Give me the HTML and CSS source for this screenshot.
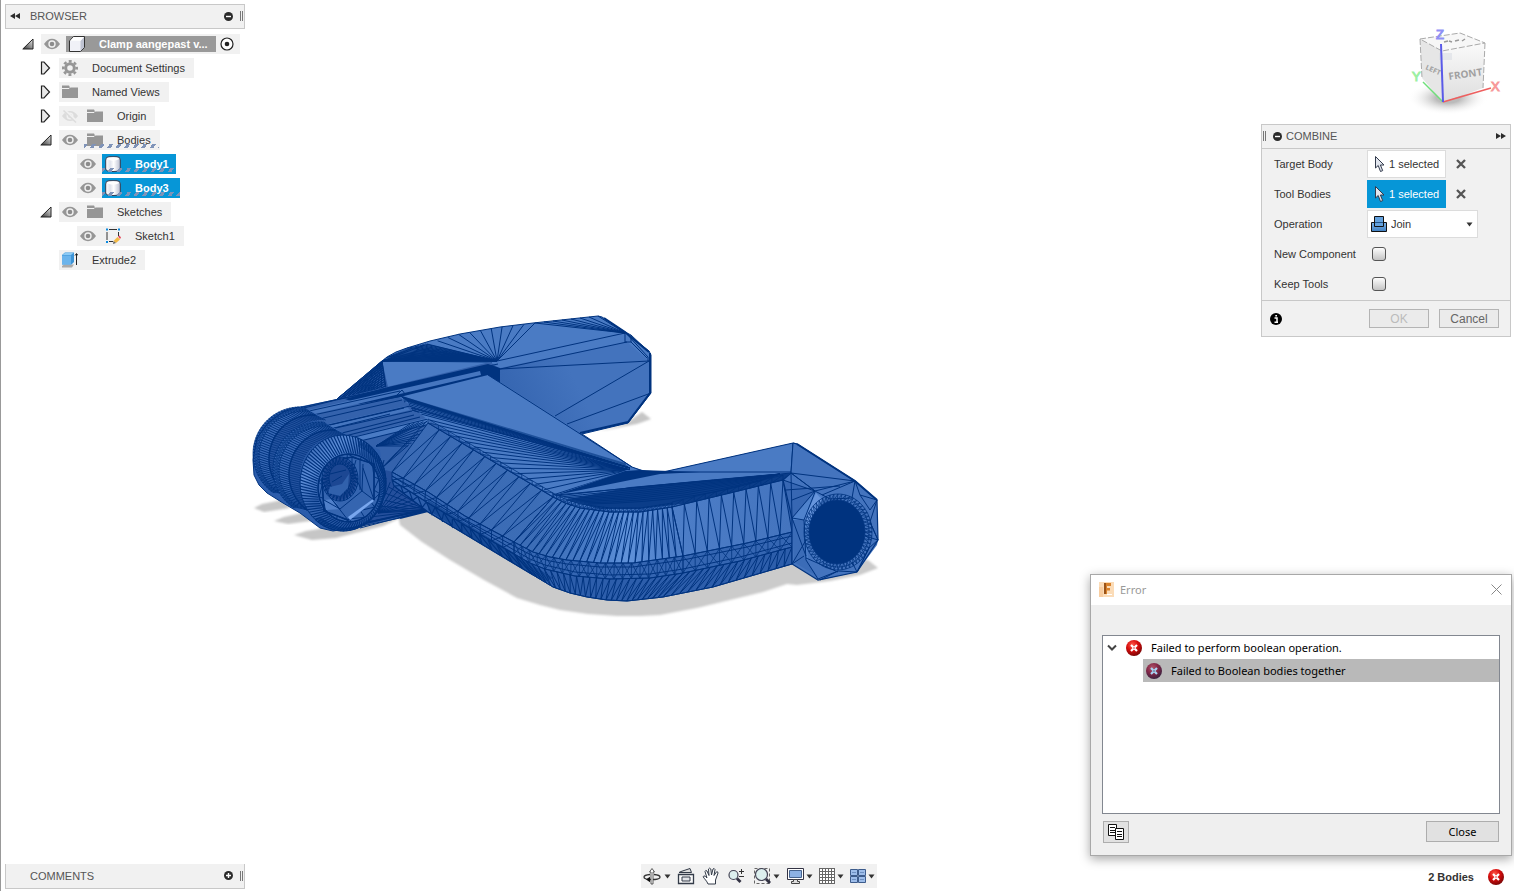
FILE: index.html
```html
<!DOCTYPE html>
<html lang="en">
<head>
<meta charset="utf-8">
<title>Combine</title>
<link rel="stylesheet" href="styles.css">
</head>
<body>
<svg class="defs" aria-hidden="true">
  <defs>
    <linearGradient id="tri" x1="0" y1="1" x2="1" y2="0"><stop offset="0" stop-color="#333"/><stop offset="1" stop-color="#eee"/></linearGradient>
    <radialGradient id="red" cx=".4" cy=".3" r=".7"><stop offset="0" stop-color="#ff5a4a"/><stop offset=".5" stop-color="#d80d0d"/><stop offset="1" stop-color="#7c0505"/></radialGradient>
    <radialGradient id="plum" cx=".4" cy=".3" r=".7"><stop offset="0" stop-color="#b0546a"/><stop offset=".5" stop-color="#842747"/><stop offset="1" stop-color="#3c2240"/></radialGradient>
    <linearGradient id="cyl" x1="0" x2="1"><stop offset="0" stop-color="#fff"/><stop offset=".3" stop-color="#dfe2ec"/><stop offset=".55" stop-color="#fff"/><stop offset="1" stop-color="#b8bdd0"/></linearGradient>
    <linearGradient id="join" x1="0" y1="0" x2="0" y2="1"><stop offset="0" stop-color="#7db4ea"/><stop offset="1" stop-color="#3f7fc0"/></linearGradient>
    <symbol id="i-open" viewBox="0 0 12 12"><path d="M11 1V11H.8Z" fill="url(#tri)" stroke="#222"/></symbol>
    <symbol id="i-shut" viewBox="0 0 12 14"><path d="M1.500 1H4L9.500 7 4 13H1.500Z" fill="#e8e8e8" stroke="#222" stroke-width="1.200"/></symbol>
    <symbol id="i-eye" viewBox="0 0 16 16"><path d="M0 8Q3.500 2.800 8 2.800T16 8Q12.500 13.200 8 13.200T0 8Z" fill="#969696"/><circle cx="8" cy="8" r="3.700" fill="#f1f1f1"/><circle cx="8" cy="8" r="2.300" fill="#8c8c8c"/></symbol>
    <symbol id="i-noeye" viewBox="0 0 16 16"><path d="M0 8Q3.500 3 8 3T16 8Q12.500 13 8 13T0 8Z" fill="#dcdcdc"/><circle cx="8" cy="8" r="3.500" fill="#f1f1f1"/><circle cx="8" cy="8" r="2" fill="#dcdcdc"/><path d="M1.500 1.500L15 14" stroke="#f1f1f1" stroke-width="3"/><path d="M1.500 2.500L14 14.500" stroke="#dcdcdc" stroke-width="1.500"/></symbol>
    <symbol id="i-folder" viewBox="0 0 16 16"><path d="M0 1.500H7L8 3.500H16V14H0Z" fill="#969696"/><path d="M0 4.500H7L8 3.500" stroke="#f1f1f1" fill="none"/></symbol>
    <symbol id="i-gear" viewBox="0 0 16 16"><circle cx="8" cy="8" r="4.300" fill="none" stroke="#969696" stroke-width="3"/><circle cx="8" cy="8" r="6.700" fill="none" stroke="#969696" stroke-width="2.600" stroke-dasharray="2.900 2.362" stroke-dashoffset="1.450"/></symbol>
    <symbol id="i-cube" viewBox="0 0 16 16"><path d="M.5 5L4.500 .5H15.500V11.500L11.500 15.500H.5Z" fill="#f0f1f7" stroke="#333"/><path d="M11.500 5L15 1V11.300L11.500 15Z" fill="#bfc3d2"/><path d="M1.200 4.800L4.800 1H14.800L11.500 4.800Z" fill="#fff"/></symbol>
    <symbol id="i-body" viewBox="0 0 16 16"><path d="M.7 4Q.7 .7 4 .7H12Q15.300 .7 15.300 4V13Q15.300 15.500 8 15.500T.7 13Z" fill="url(#cyl)" stroke="#333c52"/><path d="M1.500 3Q8 6.500 14.500 3Q13 1.200 8 1.200T1.500 3Z" fill="#fff"/></symbol>
    <symbol id="i-sketch" viewBox="0 0 16 16"><path d="M2 4V12M4 1.500H12M13.500 4V8M4 13.500H8" stroke="#333" fill="none"/><path d="M1 .5h2v2h-2zM13 .5h2v2h-2zM1 13h2v2h-2z" fill="#0a8ae0"/><path d="M8.500 13L12.500 9 15 11.500 11 15Z" fill="#f4b942"/><path d="M13 8.500L14.500 7.500 16 9.500 15 11Z" fill="#e4485a"/><path d="M8 16L8.500 13 11 15Z" fill="#666"/></symbol>
    <symbol id="i-extrude" viewBox="0 0 16 16"><path d="M0 14L2 12.500H12L10 15.500H0Z" fill="#aaa"/><path d="M0 3L3 .5H12V10L9.500 12.500H0Z" fill="#3d94d6"/><path d="M0 3.500H9V12.500H0Z" fill="#6bb4ec"/><path d="M.5 3L3 .7H11.500L9 3Z" fill="#8ccaf5"/><path d="M14.500 2V13M13 3.500L14.500 1.500 16 3.500" stroke="#222" fill="none"/></symbol>
    <symbol id="i-x" viewBox="0 0 10 10"><path d="M1 1L9 9M9 1L1 9" stroke="#555" stroke-width="2.300"/></symbol>
    <symbol id="i-err" viewBox="0 0 16 16"><circle cx="8" cy="8" r="8" fill="url(#red)"/><path d="M5 5L11 11M11 5L5 11" stroke="#fff" stroke-width="2.200"/><circle cx="8" cy="8" r=".7" fill="#b00"/></symbol>
    <symbol id="i-err2" viewBox="0 0 16 16"><circle cx="8" cy="8" r="8" fill="url(#plum)"/><path d="M5 5L11 11M11 5L5 11" stroke="#a9d4f4" stroke-width="2.200"/><circle cx="8" cy="8" r=".7" fill="#345"/></symbol>
    <symbol id="i-arrow" viewBox="0 0 12 18"><path d="M1.500 1.500V13L4.200 10.500 6.500 16.500 8.700 15.600 6.400 10H10Z" fill="#e2e6ee" stroke="#333b4d"/></symbol>
    <symbol id="i-caret" viewBox="0 0 7 5"><path d="M.5 .5H6.500L3.500 4.500Z" fill="#333"/></symbol>
    <symbol id="i-minus" viewBox="0 0 9 9"><circle cx="4.500" cy="4.500" r="4.500" fill="#2b2b2b"/><path d="M2 4.500H7" stroke="#fff" stroke-width="1.400"/></symbol>
    <symbol id="i-plus" viewBox="0 0 9 9"><circle cx="4.500" cy="4.500" r="4.500" fill="#2b2b2b"/><path d="M2 4.500H7M4.500 2V7" stroke="#fff" stroke-width="1.400"/></symbol>
    <symbol id="i-dbl" viewBox="0 0 10 6"><path d="M0 0L5 3V0L10 3 5 6V3L0 6Z" fill="#2b2b2b"/></symbol>
  </defs>
</svg>

<main class="app">
  <svg class="model" viewBox="0 0 1514 891" preserveAspectRatio="xMinYMin meet" role="img" aria-label="Clamp model"></svg>

  <section class="browser">
    <header class="bar">
      <button class="plain" aria-label="Collapse browser"><svg class="dbl flip"><use href="#i-dbl"/></svg></button>
      <h2 class="bar-title">BROWSER</h2>
      <button class="plain" aria-label="Hide browser"><svg class="round"><use href="#i-minus"/></svg></button>
      <span class="grip"></span>
    </header>
    <ul class="tree">
      <li>
        <div class="row">
          <button class="toggle" aria-label="Collapse"><svg class="tri-open"><use href="#i-open"/></svg></button>
          <div class="chip chip-root"><svg class="ico"><use href="#i-eye"/></svg>
            <span class="label root"><svg class="ico"><use href="#i-cube"/></svg>Clamp aangepast v...</span>
            <svg class="radio" viewBox="0 0 14 14"><circle cx="7" cy="7" r="6" fill="#fff" stroke="#222" stroke-width="1.200"/><circle cx="7" cy="7" r="2.300" fill="#222"/></svg>
          </div>
        </div>
        <ul>
          <li><div class="row"><button class="toggle" aria-label="Expand"><svg class="tri-shut"><use href="#i-shut"/></svg></button><div class="chip"><span class="label"><svg class="ico"><use href="#i-gear"/></svg>Document Settings</span></div></div></li>
          <li><div class="row"><button class="toggle" aria-label="Expand"><svg class="tri-shut"><use href="#i-shut"/></svg></button><div class="chip"><span class="label"><svg class="ico"><use href="#i-folder"/></svg>Named Views</span></div></div></li>
          <li><div class="row"><button class="toggle" aria-label="Expand"><svg class="tri-shut"><use href="#i-shut"/></svg></button><div class="chip"><svg class="ico"><use href="#i-noeye"/></svg><span class="label"><svg class="ico"><use href="#i-folder"/></svg>Origin</span></div></div></li>
          <li>
            <div class="row"><button class="toggle" aria-label="Collapse"><svg class="tri-open"><use href="#i-open"/></svg></button><div class="chip"><svg class="ico"><use href="#i-eye"/></svg><span class="label hatched hatched-wide"><svg class="ico"><use href="#i-folder"/></svg>Bodies</span></div></div>
            <ul>
              <li><div class="row leaf"><div class="chip flush"><svg class="ico"><use href="#i-eye"/></svg><span class="label picked hatched"><svg class="ico"><use href="#i-body"/></svg>Body1</span></div></div></li>
              <li><div class="row leaf"><div class="chip flush"><svg class="ico"><use href="#i-eye"/></svg><span class="label picked picked-wide hatched"><svg class="ico"><use href="#i-body"/></svg>Body3</span></div></div></li>
            </ul>
          </li>
          <li>
            <div class="row"><button class="toggle" aria-label="Collapse"><svg class="tri-open"><use href="#i-open"/></svg></button><div class="chip"><svg class="ico"><use href="#i-eye"/></svg><span class="label"><svg class="ico"><use href="#i-folder"/></svg>Sketches</span></div></div>
            <ul>
              <li><div class="row leaf"><div class="chip"><svg class="ico"><use href="#i-eye"/></svg><span class="label"><svg class="ico"><use href="#i-sketch"/></svg>Sketch1</span></div></div></li>
            </ul>
          </li>
          <li><div class="row leaf"><div class="chip"><span class="label"><svg class="ico"><use href="#i-extrude"/></svg>Extrude2</span></div></div></li>
        </ul>
      </li>
    </ul>
  </section>

  <div class="side">
    <svg class="viewcube" viewBox="0 0 100 96" role="img" aria-label="View cube">
      <defs>
        <radialGradient id="cshadow"><stop offset=".3" stop-color="#bbb"/><stop offset="1" stop-color="#fff" stop-opacity="0"/></radialGradient>
        <linearGradient id="cfront" x1="0" y1="0" x2="0" y2="1"><stop offset="0" stop-color="#fafafa"/><stop offset="1" stop-color="#dedede"/></linearGradient>
      </defs>
      <ellipse cx="42" cy="74" rx="40" ry="17" fill="url(#cshadow)"/>
      <path d="M14 15L54 9 79 19 36 27Z" fill="#f7f7f7"/>
      <path d="M14 15L36 27 37 78 16 54Z" fill="#e6e6e6"/>
      <path d="M36 27L79 19 77 64 37 78Z" fill="url(#cfront)"/>
      <path d="M33 29H46V36H33Z" fill="#d5d9e2" opacity=".5"/>
      <path d="M14 15L54 9 79 19 36 27ZM14 15L16 54M79 19L77 64" fill="none" stroke="#aaa" stroke-dasharray="6 2"/>
      <path d="M38 18l4-1M43 17l3 1M49 17l4-1M56 17l3-2" stroke="#999" stroke-width="1.500"/>
      <text class="face" x="43" y="56" transform="rotate(-8 43 56)">FRONT</text>
      <text class="face face-left" x="19" y="45" transform="rotate(24 19 45)">LEFT</text>
      <path d="M37 78L17 58" stroke="#6fe07a" stroke-width="1.500"/>
      <path d="M37 78L85 64" stroke="#ee5f5f" stroke-width="1.500"/>
      <path d="M37 78L35 20" stroke="#5a5ae8" stroke-width="2"/>
      <text class="axis axis-z" x="30" y="15">Z</text>
      <text class="axis axis-y" x="6" y="57">Y</text>
      <text class="axis axis-x" x="85" y="67">X</text>
    </svg>

    <form class="combine">
      <header class="combine-head">
        <span class="grip"></span>
        <svg class="round"><use href="#i-minus"/></svg>
        <h2 class="bar-title">COMBINE</h2>
        <button type="button" class="plain" aria-label="Expand panel"><svg class="dbl"><use href="#i-dbl"/></svg></button>
      </header>
      <div class="fields">
        <label for="target">Target Body</label>
        <div class="field"><button type="button" id="target" class="pick"><svg class="cursor"><use href="#i-arrow"/></svg>1 selected</button><button type="button" class="plain" aria-label="Clear target"><svg class="clear"><use href="#i-x"/></svg></button></div>
        <label for="tools">Tool Bodies</label>
        <div class="field"><button type="button" id="tools" class="pick active"><svg class="cursor"><use href="#i-arrow"/></svg>1 selected</button><button type="button" class="plain" aria-label="Clear tools"><svg class="clear"><use href="#i-x"/></svg></button></div>
        <label for="op">Operation</label>
        <div class="field select">
          <select id="op"><option>Join</option><option>Cut</option><option>Intersect</option></select>
          <svg class="join" viewBox="0 0 16 16"><path d="M.5 6.500H15.500V15.500H.5Z" fill="url(#join)" stroke="#111"/><path d="M3.500 .5H12.500V10.500H3.500Z" fill="#64a2de" stroke="#111"/><path d="M4 6.500H12" stroke="#25568a"/></svg>
          <svg class="select-caret"><use href="#i-caret"/></svg>
        </div>
        <label for="newc">New Component</label>
        <div class="field"><input type="checkbox" id="newc"></div>
        <label for="keep">Keep Tools</label>
        <div class="field"><input type="checkbox" id="keep"></div>
      </div>
      <footer class="combine-foot">
        <svg class="info" viewBox="0 0 12 12"><circle cx="6" cy="6" r="6" fill="#000"/><path d="M4.500 5H7V9M4.500 9.200H8M5.300 2.800H7" stroke="#fff" stroke-width="1.500" fill="none"/></svg>
        <button type="button" class="btn" disabled>OK</button>
        <button type="button" class="btn">Cancel</button>
      </footer>
    </form>

    <section class="dialog" role="dialog" aria-labelledby="err-title">
      <header class="dialog-head">
        <svg class="logo" viewBox="0 0 15 15"><path d="M0 0H15V15H0Z" fill="#fbdcb8"/><path d="M0 5H4V15H0Z" fill="#f8cda0"/><path d="M5 1H12V4H8V6H11V8.500H8V12H5Z" fill="#d9822b"/><path d="M5 1H7V12H5Z" fill="#9b5316"/><path d="M8 12H13V13H8Z" fill="#fff"/></svg>
        <h2 id="err-title">Error</h2>
        <button class="plain" aria-label="Dismiss"><svg class="close" viewBox="0 0 11 11"><path d="M.5 .5L10.500 10.500M10.500 .5L.5 10.500" stroke="#888" fill="none"/></svg></button>
      </header>
      <div class="dialog-body">
        <ul class="errors">
          <li class="error"><svg class="chev" viewBox="0 0 10 8"><path d="M1 1.500L5 5.500 9 1.500" stroke="#444" stroke-width="2" fill="none"/></svg><svg class="ico"><use href="#i-err"/></svg>Failed to perform boolean operation.</li>
          <li class="error error-sub"><svg class="ico"><use href="#i-err2"/></svg>Failed to Boolean bodies together</li>
        </ul>
        <div class="dialog-foot">
          <button class="copy" aria-label="Copy"><svg viewBox="0 0 17 17"><path d="M.5 .5H8.500V11.500H.5Z" fill="#fff" stroke="#111"/><path d="M2 3.500H7M2 6.500H7M2 8.500H7" stroke="#111"/><path d="M7.500 4.500H15.500V15.500H7.500Z" fill="#fff" stroke="#111"/><path d="M9 7.500H14M9 10.500H14M9 12.500H14" stroke="#111"/></svg></button>
          <button class="btn-close">Close</button>
        </div>
      </div>
    </section>
  </div>

  <section class="bar comments">
    <h2 class="bar-title">COMMENTS</h2>
    <button class="plain" aria-label="Add comment"><svg class="round"><use href="#i-plus"/></svg></button>
    <span class="grip"></span>
  </section>

  <nav class="tools">
    <button class="tool tool-spaced" aria-label="Orbit"><svg class="t18" viewBox="0 0 18 18"><path d="M7 7.500C3 7.800 1 8.800 1 10S3.500 12.500 8 12.500H12C15 12.200 17 11.200 17 10S15 7.800 11 7.500" fill="none" stroke="#333" stroke-width="1.300"/><path d="M8 17V5H6.500L9 1.500 11.500 5H10V17Z" fill="#fff" stroke="#333" stroke-width=".8"/><path d="M3 12.500L7 9.800V15.200Z" fill="#111"/></svg><svg class="caret"><use href="#i-caret"/></svg></button>
    <button class="tool" aria-label="Look at"><svg class="t18" viewBox="1 1 18 18"><path d="M2.500 8.500H17.500V17.500H2.500Z" fill="#fafafa" stroke="#333b48" stroke-width="1.300"/><path d="M6 11H14V15H6Z" fill="#e4e6ea" stroke="#333b48"/><path d="M3 6.500L5 5.500 14 2.500 15.500 6.500Z" fill="#ddd" stroke="#333b48"/></svg></button>
    <button class="tool" aria-label="Pan"><svg class="t20" viewBox="0 0 20 20"><path d="M7 18C6 15 3 12.500 2.200 10.800Q2.500 9 4.500 10.500L6 12 4 5.500Q4.500 3.700 6 5L8 9.500 7.500 3Q8.500 1.300 9.800 3L10.500 9 12 3Q13.300 1.800 14 3.500L13 9.500 15.500 5.800Q17 5.300 17 7L14.500 14V18Z" fill="#fff" stroke="#333b48"/></svg></button>
    <button class="tool" aria-label="Zoom"><svg class="t20" viewBox="0 0 20 20"><circle cx="6.500" cy="9" r="4.500" fill="#dcefee" stroke="#445" stroke-width="1.200"/><path d="M10 12.500L13.500 16" stroke="#334" stroke-width="2.800"/><path d="M12 5.500H17M14.500 3V8M12 10.500H17" stroke="#333"/></svg></button>
    <button class="tool" aria-label="Fit"><svg class="t20" viewBox="0 0 20 20"><path d="M1.500 2.500H16.500V17.500H1.500Z" fill="none" stroke="#666" stroke-dasharray="3 2"/><circle cx="8.500" cy="8.500" r="6" fill="#dcefee" stroke="#445" stroke-width="1.200"/><path d="M13 13L17 17" stroke="#334" stroke-width="2.800"/></svg><svg class="caret"><use href="#i-caret"/></svg></button>
    <button class="tool" aria-label="Display settings"><svg class="t20" viewBox="0 0 20 20"><path d="M1.500 2.500H17.500V13.500H1.500Z" fill="#fff" stroke="#334"/><path d="M3.500 4.500H15.500V11.500H3.500Z" fill="#8db2e4" stroke="#46648f"/><path d="M7.500 13.500H11.500V15.500H13.500V17.500H5.500V15.500H7.500Z" fill="#ddd" stroke="#444"/></svg><svg class="caret"><use href="#i-caret"/></svg></button>
    <button class="tool" aria-label="Grid"><svg class="t18" viewBox="0 0 18 18"><path d="M.5 1.500H15.500V16.500H.5Z" fill="#fff"/><path d="M.5 1V17M3.500 1V17M6.500 1V17M9.500 1V17M12.500 1V17M15.500 1V17M0 1.500H16M0 4.500H16M0 7.500H16M0 10.500H16M0 13.500H16M0 16.500H16" stroke="#666"/></svg><svg class="caret"><use href="#i-caret"/></svg></button>
    <button class="tool" aria-label="Viewports"><svg class="t18" viewBox="0 0 18 18"><path d="M.5 2.500H7.500V8.500H.5ZM8.500 2.500H15.500V8.500H8.500ZM.5 9.500H7.500V15.500H.5ZM8.500 9.500H15.500V15.500H8.500Z" fill="#9dbdea" stroke="#3d5c8c"/><path d="M2 5.500H6M10 5.500H14M2 12.500H6M10 12.500H14" stroke="#6e90c2"/></svg><svg class="caret"><use href="#i-caret"/></svg></button>
  </nav>

  <div class="status"><span>2 Bodies</span><svg class="ico"><use href="#i-err"/></svg></div>
</main>
<script src="model.js"></script>
</body>
</html>
```
FILE: styles.css
```css
* { box-sizing: border-box; }
body {
  margin: 0;
  background: #fff;
  color: #333;
  font-family: "Liberation Sans", Arial, sans-serif;
  font-size: 11px;
  line-height: 16px;
}
h2 { margin: 0; font-size: 11px; font-weight: 400; }
ul { margin: 0; padding: 0; list-style: none; }
svg { display: block; flex: none; }
button, select { font: inherit; color: inherit; }
.defs { position: absolute; width: 0; height: 0; }

.app {
  position: relative;
  min-height: 100vh;
  display: grid;
  grid-template-columns: 1fr auto 1fr;
  grid-template-rows: 1fr auto;
  row-gap: 8px;
  padding: 4px 2px 2px 4px;
  border-left: 1px solid #999;
}
.model { position: absolute; top: 0; left: -1px; width: 1514px; height: 891px; }
.browser, .side, .comments, .tools, .status { position: relative; }

.plain { padding: 0; border: 0; background: none; }
.round { width: 9px; height: 9px; }
.dbl { width: 10px; height: 6px; }
.flip { rotate: 180deg; }
.grip { width: 3px; height: 10px; border: solid #777; border-width: 0 1px; }

.bar {
  display: flex;
  align-items: center;
  width: 240px;
  height: 25px;
  padding: 0 0 1px 4px;
  background: #f1f1f1;
  border: 1px solid #c8c8c8;
}
.bar-title { flex: 1; color: #555; }
.bar .bar-title { padding-left: 10px; }
.bar .grip { margin: 0 1px 0 7px; }
.comments { align-self: end; border-top: 0; padding-left: 14px; }

.browser { grid-column: 1; }
.tree { padding: 5px 0 0 18px; }
.tree ul { padding-left: 18px; }
.row { display: flex; align-items: center; height: 20px; margin-bottom: 4px; }
.leaf { padding-left: 18px; }
.toggle { width: 18px; height: 20px; padding: 0; border: 0; background: none; }
.tri-open { width: 12px; height: 12px; margin-left: -1px; }
.tri-shut { width: 12px; height: 14px; margin-left: -1px; }
.chip { display: flex; align-items: center; gap: 6px; height: 20px; padding: 0 9px 0 3px; background: #f1f1f1; }
.chip > .label:first-child { padding-left: 0; }
.chip.flush { padding-right: 0; }
.chip-root { width: 199px; padding-right: 0; }
.label { position: relative; display: flex; align-items: center; gap: 14px; height: 20px; padding-left: 3px; white-space: nowrap; }
.ico { width: 16px; height: 16px; }
.root { width: 150px; height: 16px; background: #999; color: #fff; font-weight: 700; }
.radio { width: 14px; height: 14px; margin-left: -2px; }
.picked { padding-right: 7px; background: #0696d7; color: #fff; font-weight: 700; }
.picked-wide { padding-right: 11px; }
.hatched::after {
  content: "";
  position: absolute;
  inset: auto 0 2px 0;
  height: 4px;
  background: repeating-linear-gradient(125deg, #7f93b8 0 3px, transparent 3px 7px);
}
.hatched-wide::after { right: -8px; }

.side { grid-column: 2 / 4; display: flex; flex-direction: column; align-items: flex-end; padding-top: 20px; }
.viewcube { width: 100px; height: 96px; margin-right: 6px; }
.face { font: 700 10px "Open Sans", sans-serif; fill: #a0a0a0; }
.face-left { font-size: 7px; }
.axis { font: 13px "Liberation Sans", sans-serif; stroke: currentColor; fill: currentColor; }
.axis-x { color: #f79a9a; }
.axis-y { color: #9df0a4; }
.axis-z { color: #9090f5; }

.combine { width: 250px; margin: 4px 1px 0 0; background: #f1f1f1; border: 1px solid #c8c8c8; }
.combine-head { display: flex; align-items: center; height: 24px; padding: 0 4px 1px 1px; border-bottom: 1px solid #c8c8c8; }
.combine-head .round { margin: 0 4px 0 7px; }
.fields { display: grid; grid-template-columns: 94px 1fr; grid-auto-rows: 30px; align-items: center; padding: 0 0 1px 12px; border-bottom: 1px solid #c8c8c8; }
.field { display: flex; align-items: center; gap: 10px; margin-left: -1px; }
.pick { display: flex; align-items: center; gap: 3px; width: 79px; height: 28px; padding: 0 0 0 6px; background: #fff; border: 1px solid #dcdcdc; }
.active { background: #0696d7; border-color: #0696d7; color: #fff; }
.cursor { width: 12px; height: 18px; }
.clear { width: 10px; height: 10px; }
.select { position: relative; width: 111px; }
.select select { appearance: none; width: 111px; height: 28px; padding: 0 20px 0 23px; background: #fff; border: 1px solid #dcdcdc; border-radius: 0; }
.join { position: absolute; left: 4px; top: 6px; width: 16px; height: 16px; pointer-events: none; }
.select-caret { position: absolute; right: 5px; top: 12px; width: 7px; height: 5px; pointer-events: none; }
input[type="checkbox"] {
  appearance: none;
  width: 14px;
  height: 14px;
  margin: 0 0 0 5px;
  border: 1px solid #555;
  border-radius: 3px;
  background: linear-gradient(#fdfdfd, #c4c4c4);
}
.combine-foot { display: flex; align-items: center; gap: 10px; height: 35px; padding: 0 11px 0 8px; }
.info { width: 12px; height: 12px; margin-right: auto; }
.btn { width: 60px; height: 19px; padding: 0; border: 1px solid #b4b4b4; background: #ebebeb; color: #666; font-size: 12px; line-height: 16px; }
.btn:disabled { color: #bbb; }

.dialog {
  display: flex;
  flex-direction: column;
  width: 422px;
  min-height: 282px;
  margin-top: auto;
  background: #efefef;
  border: 1px solid #a8a8a8;
  box-shadow: 0 3px 10px rgba(0, 0, 0, .35);
  color: #000;
  font-family: "Noto Sans", "Open Sans", sans-serif;
  font-size: 11px;
}
.dialog-head { display: flex; align-items: center; gap: 6px; height: 30px; padding: 0 9px 1px 8px; background: #fff; color: #999; }
.dialog-head h2 { flex: 1; }
.logo { width: 15px; height: 15px; }
.close { width: 11px; height: 11px; }
.dialog-body { flex: 1; display: flex; flex-direction: column; padding: 30px 11px 12px; }
.errors { flex: 1; background: #fff; border: 1px solid #828790; }
.error { display: flex; align-items: center; gap: 9px; height: 23px; padding-left: 4px; }
.error .chev { width: 10px; height: 8px; }
.error-sub { margin-left: 40px; padding-left: 3px; background: #b9b9b9; }
.dialog-foot { display: flex; align-items: flex-start; justify-content: space-between; padding: 7px 1px 0; }
.copy { width: 26px; height: 22px; padding: 2px 4px; border: 1px solid #adadad; background: #e1e1e1; }
.copy svg { width: 17px; height: 17px; }
.btn-close { width: 73px; height: 21px; padding: 0; border: 1px solid #adadad; background: #e1e1e1; line-height: 18px; }

.tools { display: flex; align-items: center; gap: 6px; height: 24px; padding: 0 2px; background: #f1f1f1; }
.tool { display: flex; align-items: center; padding: 0; border: 0; background: none; }
.tool-spaced { gap: 3px; }
.t20 { width: 20px; height: 20px; }
.t18 { width: 18px; height: 18px; }
.caret { width: 7px; height: 5px; }

.status { display: flex; align-items: center; justify-content: flex-end; gap: 14px; padding-right: 8px; font-weight: 700; }
```
FILE: model.js
```js
const NS = "http://www.w3.org/2000/svg";
const root = document.querySelector(".model");
const DARK = "#00337f";

root.insertAdjacentHTML("afterbegin", `<defs>
  <filter id="soft" x="-5%" y="-5%" width="110%" height="110%"><feGaussianBlur stdDeviation="1.2"/></filter>
  <linearGradient id="bend" gradientUnits="userSpaceOnUse" x1="400" x2="790" y1="0" y2="0">
    <stop offset="0" stop-color="#3a6ab4"/><stop offset=".35" stop-color="#3c6db6"/><stop offset=".5" stop-color="#4a7dc8"/>
    <stop offset=".58" stop-color="#6092da"/><stop offset=".7" stop-color="#4d7ec8"/><stop offset="1" stop-color="#4474be"/>
  </linearGradient>
  <linearGradient id="block" gradientUnits="userSpaceOnUse" x1="500" x2="560" y1="380" y2="350"><stop offset="0" stop-color="#3666b1"/><stop offset="1" stop-color="#4373bd"/></linearGradient>
  <linearGradient id="front" gradientUnits="userSpaceOnUse" x1="305" x2="360" y1="445" y2="500"><stop offset="0" stop-color="#3565b1"/><stop offset=".3" stop-color="#5b8cd6"/><stop offset=".6" stop-color="#3565b1"/><stop offset="1" stop-color="#2a5aa6"/></linearGradient>
</defs>`);

function el(name, attrs) {
  const node = document.createElementNS(NS, name);
  for (const key in attrs) node.setAttribute(key, attrs[key]);
  root.appendChild(node);
}
const poly = (points, fill, extra) => el("path", { d: "M" + points.join("L") + "Z", fill, ...extra });
const lines = (d, width = 1, color = DARK) => el("path", { d, fill: "none", stroke: color, "stroke-width": width });

// Point at fraction t of the length of a polyline.
function at(line, t) {
  const len = line.slice(1).map((p, i) => Math.hypot(p[0] - line[i][0], p[1] - line[i][1]));
  let left = t * len.reduce((a, b) => a + b, 0);
  for (let i = 0; i < len.length; i++) {
    if (left <= len[i] || i === len.length - 1) {
      const k = Math.min(1, left / len[i]);
      return [line[i][0] + k * (line[i + 1][0] - line[i][0]), line[i][1] + k * (line[i + 1][1] - line[i][1])];
    }
    left -= len[i];
  }
}
// Triangulated strip between two polylines.
function strip(a, b, n, width = 1, cross = false) {
  let d = "M" + a.join("L") + "M" + b.join("L");
  for (let i = 0; i <= n; i++) {
    d += "M" + at(a, i / n) + "L" + at(b, i / n);
    if (i < n) d += "L" + at(a, (i + 1) / n);
    if (cross && i < n) d += "M" + at(a, i / n) + "L" + at(b, (i + 1) / n);
  }
  lines(d, width);
}
// Plain rungs between two polylines.
function rungs(a, b, n, width = 1) {
  let d = "";
  for (let i = 0; i <= n; i++) d += "M" + at(a, i / n) + "L" + at(b, i / n);
  lines(d, width);
}
function fan(tip, edge, n, width = 1) {
  let d = "";
  for (let i = 0; i <= n; i++) d += "M" + tip + "L" + at(edge, i / n);
  lines(d, width);
}
function arc(cx, cy, rx, ry, from, to, steps = 40) {
  const out = [];
  for (let i = 0; i <= steps; i++) {
    const a = (from + (to - from) * i / steps) * Math.PI / 180;
    out.push([cx + rx * Math.cos(a), cy + ry * Math.sin(a)]);
  }
  return out;
}

// Ground shadow
const soft = { filter: "url(#soft)" };
poly([[398,516],[400,525],[422,542],[450,560],[484,580],[517,598],[540,605],[560,610],[588,614],[617,616],[640,616],[660,615],[697,608],[763,592],[787,584],[797,585],[830,581],[860,575],[878,568],[868,560],[700,560],[560,560],[428,508]], "#cbcbcb", soft);
poly([[625,424],[642,412],[651,419],[637,424],[600,431]], "#c6c6c6", soft);
poly([[254,508],[262,504],[282,500],[290,508],[264,512]], "#c6c6c6", soft);
poly([[274,521],[284,517],[302,513],[318,520],[288,524]], "#c6c6c6", soft);
poly([[294,535],[306,531],[345,525],[400,518],[383,526],[336,538],[312,540]], "#c6c6c6", soft);

// Body underlay
poly([[337,399],[382,361],[488,375],[580,433],[632,467],[646,471],[663,472],[793,443],[850,480],[850,560],[818,578],[792,563],[713,586],[663,596],[627,600],[587,596],[553,586],[483,544],[428,511],[357,526],[300,500],[300,420]], "#2f60ad");

// Rear block
const crest = [[382,361],[387,357],[396,352],[407,348],[430,341],[460,334],[500,327],[533,323],[570,319],[598,316]];
poly([[337,399],...crest,[602,317],[625,332],[649,351],[651,355],[651,393],[628,423],[582,434],[488,420],[380,410]], "#4a7bc4");
poly([[500,368],[627,342],[649,361],[651,393],[628,423],[580,433],[500,382]], "url(#block)");
poly([[337,399],[382,361],[388,387],[380,395]], "#2b59a5");
strip([[382,361],[386,388]], [[337,399],[372,395]], 12);
fan([382,361], [[337,399],[386,392]], 10);
poly([[382,361],[396,356],[425,349],[450,354],[492,362]], DARK, { opacity: .6 });
fan([497,361], [[382,361],[387,357],[407,348],[425,344]], 18);
fan([382,361], [[425,345],[445,351],[492,362]], 9);
fan([497,361], [[427,344],[460,334],[500,327],[535,323]], 10);
fan([625,333], [[535,323],[598,316]], 7);
lines("M497 361L625 333M500 369L627 342M500 369L649 361L555 416M651 393L567 424M625 332V342L631 342V335L625 332L648 357V361M631 335L649 352M631 342L647 358");
lines("M" + crest.join("L") + "L602 317L625 332L649 351L651 355V393L628 423L582 434", 1);
lines("M604 318L625 332L649 352M650 353V394M650 393L628 422L580 433", 2);

// Finger bars joining the fork to the arm
poly([[298,407],[337,399],[490,362],[500,369],[500,378],[430,430],[430,511],[357,527],[320,500]], "#3462ac");
poly([[384,388],[488,364],[500,368],[500,382],[470,382],[400,397],[360,404],[345,399]], DARK);
poly([[304,411],[480,371],[481,375],[306,416]], "#4676bf");
poly([[320,426],[406,406],[410,410],[324,431]], "#4676bf");
poly([[348,438],[427,418],[431,424],[360,441]], "#4a7bc4");
lines("M298 408L498 364M300 413L400 391M304 417L402 396L490 376M306 422L402 400M300 409L336 400L488 368M308 430L404 408M310 434L390 414", 1);
lines("M320 427L410 406M322 431L412 411M330 436L414 415M346 439L428 419M352 443L430 424M345 436L420 417", 1.2);
lines("M396 396L402 390L408 398L412 394L418 402L412 408L420 404L426 412L432 418M404 402L414 398M412 410L424 414", 1);
fan([376,446], [[410,424],[427,421],[420,436],[408,446]], 11);
fan([382,468], [[427,421],[408,446],[384,460]], 4);
poly([[385,470],[400,474],[430,508],[357,527],[372,512]], "#244f9c");
fan([378,513], [[386,478],[394,486],[428,510]], 9);
fan([428,510], [[360,528],[380,505],[386,490],[394,482]], 8);
lines("M400 518L428 511M357 525L428 509", 2);

// Arm top face and its fans
poly([[488,375],[632,467],[640,471],[553,496],[428,420],[400,397]], "#4a7bc4");
fan([630,468], [[400,396],[407,401],[412,410]], 9);
fan([630,470], [[413,408],[428,419],[553,495]], 16);
poly([[402,396],[404,401],[560,448],[630,471],[625,463]], DARK, { opacity: .6 });
lines("M488 375L632 467", 1);
poly([[553,496],[627,470],[643,471],[663,472],[793,443],[791,473],[783,480],[760,488],[690,505],[620,511],[580,506]], "#4a7bc4");
poly([[556,495],[625,471],[640,470],[700,472],[660,474]], DARK);
poly([[565,500],[630,487],[790,473],[783,481],[765,485],[730,494],[690,503],[640,509],[600,509]], DARK, { opacity: .85 });
for (let i = 0; i < 9; i++) lines(`M${556 + i * 4} ${496 + i}Q${640 + i * 8} ${486 + i * 2} 780 474`);
lines("M630 472H791L793 443M556 495L791 473M582 434L632 467L643 471L663 472L793 443L797 444L855 481");

// Arm wall: straight run, bend, straight run
const t1 = [[428,423],[553,497]], b1 = [[392,472],[428,492],[465,516],[514,542]];
const t2 = [[553,497],[565,503],[580,508],[610,512],[640,512],[672,507]], b2 = [[514,542],[533,552],[550,557],[567,560],[600,563],[633,563],[683,556]];
const t3 = [[672,507],[730,493],[783,480]], b3 = [[683,556],[747,543],[792,532]];
const m1 = [[392,480],[428,503],[483,536],[514,554]], m2 = [[514,554],[530,563],[545,569],[575,576],[610,579],[650,578],[683,573]], m3 = [[683,573],[740,561],[792,547]];
const s1 = [[394,486],[428,512],[483,545],[533,575]], s2 = [[533,575],[553,587],[570,593],[587,597],[607,600],[627,601],[663,597]], s3 = [[663,597],[713,587],[792,564]];
poly([...t1,...t2,...t3,...[...b1,...b2,...b3].reverse()], "url(#bend)");
poly([...b1,...b2,...b3,...[...m1,...m2,...m3].reverse()], "#3566b2");
poly([...m1,...m2,...m3,...[...s1,...s2,...s3].reverse()], "#2d5eab");
strip(t1, b1, 11);
strip(t2, b2, 25);
strip(t3, b3, 9);
strip(b1, m1, 11);
strip(b2, m2, 20, .8, true);
strip(b3, m3, 9, .8, true);
strip(m1, s1, 14, 1.2);
strip(m2, s2, 26, 1);
strip(m3, s3, 16, 1);
poly([[428,500],[514,553],[553,578],[545,582],[483,545],[428,510]], DARK, { opacity: .5 });
const rim = (line, dy) => line.map(([x, y]) => [x, y + dy]);
strip(rim(t1, -4), t1, 12, .8);
strip(rim(t2, -4), t2, 30, .8);
strip(rim(t3, -5), t3, 10, .8);
lines("M" + rim([...b1, ...b2, ...b3], 4).join("L") + "M" + rim([...m1, ...m2, ...m3], -4).join("L"));
lines("M" + [...s1, ...s2, ...s3].join("L"), 1);

// Fork fingers
poly([[298,407],[283,412],[268,423],[257,438],[253,460],[254,475],[259,485],[267,493],[283,503],[300,513],[320,528],[333,531],[357,527],[385,500],[380,450],[350,436],[322,424]], "#2c5dab");
const rings = [[300, 454], [320, 469]];
for (const [cx, cy] of rings) {
  poly([...arc(cx, cy, 47, 47, 125, 275), ...arc(cx + 20, cy + 8, 44, 44, 275, 125)], "#3869b6");
  poly([...arc(cx + 12, cy + 5, 43, 44, 125, 275), ...arc(cx + 22, cy + 8, 42, 42, 275, 125)], "#2553a0");
  strip(arc(cx, cy, 47, 47, 125, 275), arc(cx + 5, cy + 2, 46, 45, 125, 275), 42, .7, true);
  rungs(arc(cx + 5, cy + 2, 46, 45, 125, 275), arc(cx + 12, cy + 5, 43, 44, 125, 275), 50, 1);
  rungs(arc(cx + 12, cy + 5, 43, 44, 125, 275), arc(cx + 22, cy + 8, 42, 42, 125, 275), 50, .8);
  lines("M" + arc(cx + 12, cy + 5, 43, 44, 125, 275).join("L"), 1.5);
}
poly(arc(343, 483, 43, 48, 0, 360), "url(#front)");
rungs(arc(343, 483, 43, 48, 0, 360, 90), arc(349, 488, 32, 35, 0, 360, 90), 92, 1.2);
strip(arc(343, 483, 43, 48, -70, 130, 60), arc(346, 486, 38, 42, -70, 130, 60), 46, .7, true);
lines("M" + arc(343, 483, 43, 48, 0, 360).join("L"), 1);
poly(arc(349, 488, 31, 34, 0, 360), "#3565b0", { stroke: DARK, "stroke-width": 1.5 });
const hex = [[334,461],[352,457],[374,464],[374,500],[348,520],[324,511],[322,480]];
lines("M" + hex.join("L") + "Z", 1.5);
strip([...hex, hex[0]], arc(349, 488, 31, 34, -120, 240), 14);
poly([[348,517],[373,499],[374,501],[350,520]], "#79a7ee");
poly([[324,500],[333,499],[341,509],[326,510]], "#5080ca");
poly(arc(340, 479, 17, 21, 0, 360), "#1c4793");
strip(arc(340, 479, 18, 22, 0, 360), arc(340, 478, 11, 14, 0, 360), 32);
poly([[328,493],[330,487],[342,484],[349,474],[348,488],[340,496]], "#3161ac");
lines("M322 480L330 497L348 520M330 497L340 509L362 491L374 500M362 491L352 470V457M362 491L363 464M374 500L363 468M324 500L340 509M356 460L352 474M360 460V490M330 474L346 470M332 482L342 476");

// Arm end with octagonal face
poly([[791,473],[793,443],[797,444],[855,481],[877,500],[878,540],[877,545],[857,572],[820,580],[817,579],[792,564],[792,518],[783,480]], "#4474be");
poly([[793,518],[815,492],[822,497],[806,530],[808,560],[794,560]], "#4f82cc");
poly([[792,520],[804,520],[806,560],[818,577],[794,562]], "#3b6cb7");
poly([[804,520],[816,493],[822,500],[808,524]], "#6795dc");
poly([[792,518],[815,491],[783,480]], "#3767b3");
lines("M793 443L797 444L855 481L877 500L878 540L857 572L818 580L792 564V518L783 480L791 473", 1.2);
lines("M797 444L855 481L877 500", 2);
lines("M791 473L793 443M791 473L855 481L815 491ZM791 473L792 518L815 491ZM783 480L815 491M792 500L815 491M786 490L840 486M855 481L860 495L877 500M855 481L852 498L830 499L815 491M792 518L804 520L815 492M804 520L806 560L818 579M792 564L804 556M792 518L806 556M818 579L838 571L857 572L869 548L878 540L870 522L877 500M838 571L820 580M869 548L857 572M870 522L878 540M860 495L870 510L877 500M822 495L855 481M806 540L792 564M806 558L838 572M857 572L852 562M878 540L865 536");
strip(arc(838, 532, 34, 38, 0, 360, 60), arc(837, 532, 28, 32, 0, 360, 60), 56, .8);
lines("M" + arc(838, 532, 31, 35, -60, 120).join("L"), .8);
poly(arc(837, 532, 28, 32, 0, 360), DARK);

// Outer contour of the fork
lines("M298 407L283 412L268 423L257 438L253 460L254 475L259 485L267 493L283 503L300 513L320 528L333 531L357 527L400 518", 1);
```
